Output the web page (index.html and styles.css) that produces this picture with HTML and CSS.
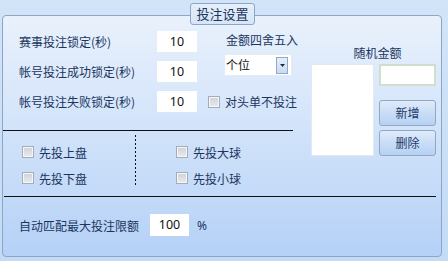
FILE: index.html
```html
<!DOCTYPE html>
<html lang="zh">
<head>
<meta charset="utf-8">
<link rel="stylesheet" href="styles.css">
</head>
<body>
<div class="panel">
  <div class="tab">投注设置</div>
  <div class="upper">
    <div class="upper-left">
      <div class="settings">
        <div class="lbl">赛事投注锁定(秒)</div>
        <div class="num">10</div>
        <div class="round">
          <div class="round-title">金额四舍五入</div>
          <div class="select"><span class="select-text">个位</span><span class="select-btn"><svg width="5" height="3" viewBox="0 0 5 3"><path d="M0 0h5L2.5 3z" fill="#1d2c44"/></svg></span></div>
        </div>
        <div class="lbl">帐号投注成功锁定(秒)</div>
        <div class="num">10</div>
        <div class="lbl">帐号投注失败锁定(秒)</div>
        <div class="num">10</div>
        <div class="check mid-check"><span class="cb"></span>对头单不投注</div>
      </div>
      <div class="checks">
        <div class="check-col first">
          <div class="check"><span class="cb"></span>先投上盘</div>
          <div class="check"><span class="cb"></span>先投下盘</div>
        </div>
        <div class="dash"></div>
        <div class="check-col second">
          <div class="check"><span class="cb"></span>先投大球</div>
          <div class="check"><span class="cb"></span>先投小球</div>
        </div>
      </div>
    </div>
    <div class="upper-right">
      <div class="rand-title">随机金额</div>
      <div class="rand-body">
        <div class="listbox"></div>
        <div class="side">
          <div class="rand-input"></div>
          <div class="btn add">新增</div>
          <div class="btn del">删除</div>
        </div>
      </div>
    </div>
  </div>
  <div class="line2"></div>
  <div class="bottom">
    <div class="bottom-lbl">自动匹配最大投注限额</div>
    <div class="num pct">100</div>
    <div class="pct-sign">%</div>
  </div>
</div>
</body>
</html>
```
FILE: styles.css
```css
* { box-sizing: border-box; }
html, body { margin: 0; padding: 0; }
body {
  width: 448px;
  height: 261px;
  overflow: hidden;
  background: linear-gradient(to bottom, #d2e4f7 0%, #c4dbf5 100%);
  font-family: "Noto Sans CJK SC", "Noto Sans", sans-serif;
  font-size: 12px;
  color: #1b355e;
}
.panel {
  position: relative;
  margin: 15px 0 0 2px;
  width: 440px;
  height: 242px;
  border: 1px solid #8ba6c6;
  border-radius: 4px;
  background: linear-gradient(to bottom, #e9f1fc 0%, #d3e4fa 45%, #b5d1f7 100%);
}
.tab {
  position: absolute;
  left: 187px;
  top: -13px;
  width: 65px;
  height: 22px;
  border: 1px solid #8ba6c6;
  border-radius: 3px;
  background: linear-gradient(to bottom, #e6eff9, #d6e5f7);
  font-size: 13px;
  line-height: 19px;
  text-align: center;
  color: #1b355e;
}
.upper { display: flex; }
.upper-left { width: 290px; }
.settings {
  height: 115px;
  border-bottom: 1px solid #111;
  display: grid;
  grid-template-columns: 138px 40px 1fr;
  grid-template-rows: 21px 21px 21px;
  row-gap: 9px;
  padding: 15px 0 0 16px;
  align-items: center;
}
.lbl { line-height: 17px; white-space: nowrap; }
.num {
  height: 21px;
  background: #fff;
  text-align: center;
  font-size: 12.5px;
  line-height: 21px;
  color: #111;
  font-family: "Noto Sans", sans-serif;
}
.round {
  grid-column: 3;
  grid-row: 1 / 3;
  align-self: start;
  padding-left: 27px;
}
.round-title { line-height: 17px; margin-left: 2px; white-space: nowrap; }
.select {
  margin-top: 6px;
  width: 68px;
  height: 22px;
  background: #fff;
  border: 1px solid #e4ebf3;
  display: flex;
  align-items: center;
  justify-content: space-between;
  padding: 0 3px 0 1px;
}
.select-text { color: #111; line-height: 16px; }
.select-btn {
  width: 12px;
  height: 17px;
  border: 1px solid #8fa9c7;
  background: linear-gradient(to bottom, #e7eff9, #c9dbf1);
  display: flex;
  align-items: center;
  justify-content: center;
}
.check {
  display: flex;
  align-items: center;
  gap: 5px;
  white-space: nowrap;
  line-height: 17px;
}
.mid-check { grid-column: 3; grid-row: 3; margin-left: 11px; }
.cb {
  width: 12px;
  height: 12px;
  flex: none;
  border: 1px solid #a3acb8;
  background: linear-gradient(to bottom, #cfd2d6, #e9eaec);
  box-shadow: inset 0 0 0 1px #f6f7f8;
}
.checks {
  height: 65px;
  display: flex;
  padding-left: 19px;
}
.check-col { padding-top: 8px; }
.check-col .check { height: 26px; }
.check-col.first { width: 113px; }
.dash {
  width: 1px;
  height: 50px;
  margin-top: 4px;
  background: repeating-linear-gradient(to bottom, #111 0 2px, transparent 2px 4px);
}
.check-col.second { margin-left: 40px; }
.upper-right { margin-left: 18px; width: 125px; }
.rand-title {
  margin-top: 28px;
  line-height: 17px;
  text-align: center;
  padding-left: 8px;
}
.rand-body { display: flex; margin-top: 3px; }
.listbox {
  width: 63px;
  height: 92px;
  background: #fff;
  border: 1px solid #e2e9f1;
}
.side { margin-left: 5px; width: 57px; }
.rand-input {
  height: 22px;
  background: #fff;
  border: 2px solid #cfdfcf;
}
.btn {
  height: 26px;
  border: 1px solid #8fa8c6;
  border-radius: 3px;
  background: linear-gradient(to bottom, #dfebfa 0%, #c9ddf6 50%, #b7d1f3 100%);
  text-align: center;
  line-height: 24px;
  color: #1e3a6a;
}
.btn.add { margin-top: 14px; }
.btn.del { margin-top: 4px; }
.line2 {
  height: 0;
  border-top: 1px solid #111;
  margin: 0 5px 0 1px;
}
.bottom {
  display: flex;
  align-items: center;
  padding: 17px 0 0 16px;
}
.bottom-lbl { width: 131px; line-height: 17px; white-space: nowrap; }
.num.pct { width: 39px; height: 22px; line-height: 22px; }
.pct-sign { margin-left: 8px; font-family: "Noto Sans", sans-serif; }
```
